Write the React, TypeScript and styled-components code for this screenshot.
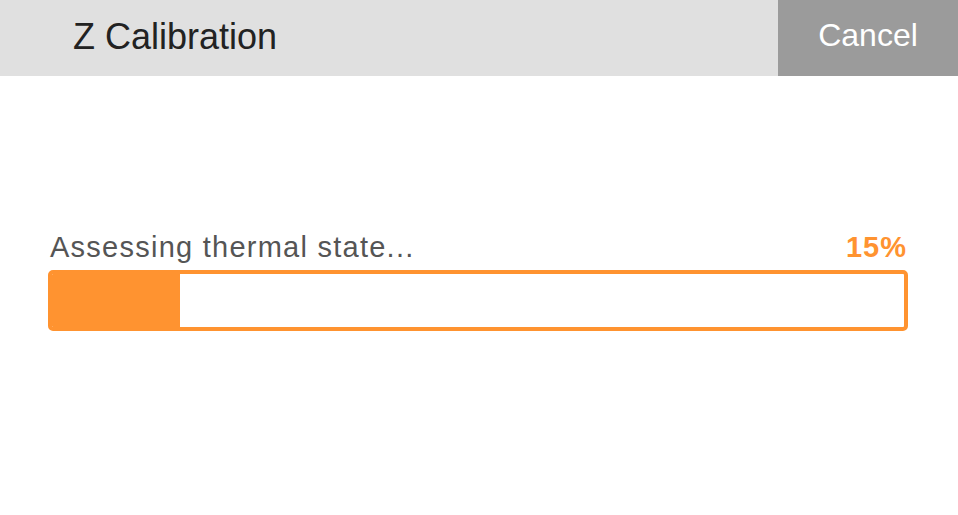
import React from "react";
import styled, { createGlobalStyle } from "styled-components";

const GlobalStyle = createGlobalStyle`
    html, body {
        margin: 0;
        padding: 0;
        background: #ffffff;
        font-family: "Liberation Sans", Arial, Helvetica, sans-serif;
    }
`

const Page = styled.div`
    width: 958px;
    height: 515px;
    display: flex;
    flex-direction: column;
    background: #ffffff;
`

const Header = styled.div`
    height: 76px;
    display: flex;
    background: #e0e0e0;
`

const Title = styled.div`
    flex: 1;
    padding-left: 73px;
    font-size: 36px;
    line-height: 74px;
    color: #222222;
`

const CancelButton = styled.button`
    width: 180px;
    height: 76px;
    border: none;
    padding: 0 0 6px;
    background: #9b9b9b;
    color: #ffffff;
    font-family: inherit;
    font-size: 32px;
    line-height: 70px;
    cursor: pointer;
`

const Body = styled.div`
    padding: 155px 50px 0 48px;
`

const StatusRow = styled.div`
    display: flex;
    justify-content: space-between;
    padding: 0 1px 0 2px;
    font-size: 29px;
    line-height: 33px;
    letter-spacing: 1.25px;
`

const StatusText = styled.div`
    color: #555555;
`

const Percent = styled.div`
    color: #ff9330;
    font-weight: bold;
    letter-spacing: 1px;
`

const Track = styled.div`
    margin-top: 6px;
    height: 53px;
    border: 4px solid #ff9330;
    border-radius: 5px;
    background: #ffffff;
    overflow: hidden;
`

const Fill = styled.div`
    height: 100%;
    background: #ff9330;
`

export default function App() {
    const progress = 15;

    return (
        <>
            <GlobalStyle />
            <Page>
                <Header>
                    <Title>Z Calibration</Title>
                    <CancelButton>Cancel</CancelButton>
                </Header>
                <Body>
                    <StatusRow>
                        <StatusText>Assessing thermal state...</StatusText>
                        <Percent>{progress}%</Percent>
                    </StatusRow>
                    <Track>
                        <Fill style={{ width: `${progress}%` }} />
                    </Track>
                </Body>
            </Page>
        </>
    );
}
